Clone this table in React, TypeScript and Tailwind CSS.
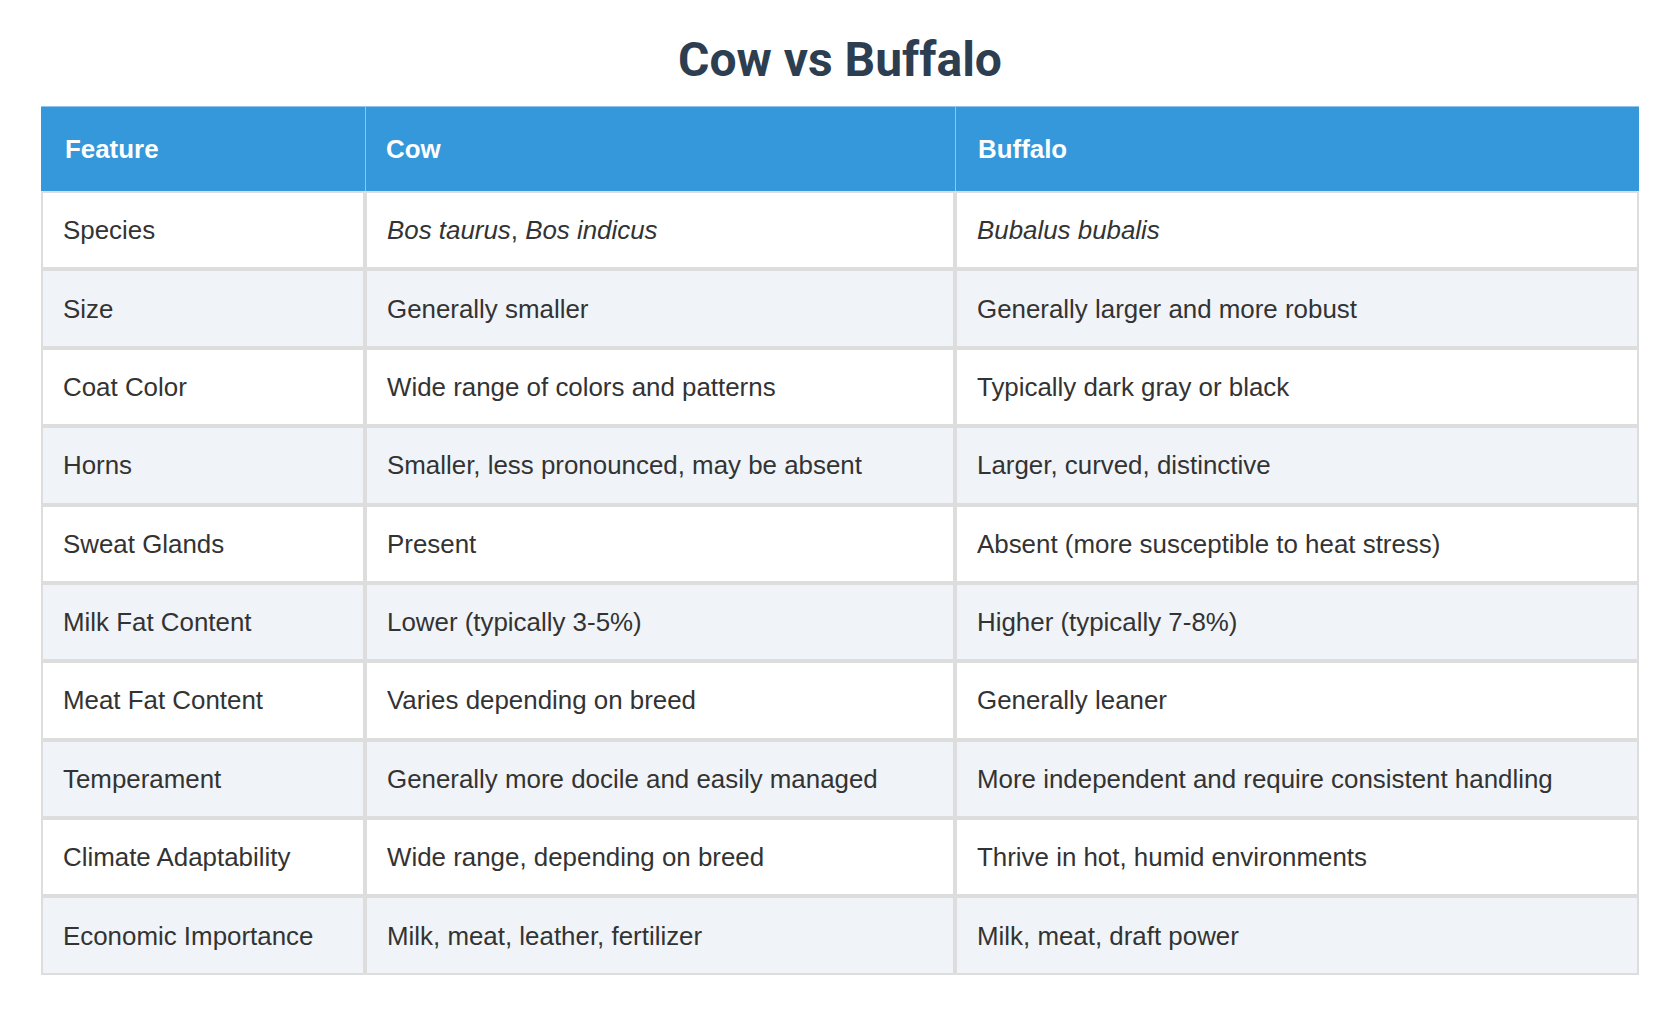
const rows: { feature: string; cow: React.ReactNode; buffalo: React.ReactNode }[] = [
  {
    feature: 'Species',
    cow: (
      <>
        <em>Bos taurus</em>, <em>Bos indicus</em>
      </>
    ),
    buffalo: <em>Bubalus bubalis</em>,
  },
  { feature: 'Size', cow: 'Generally smaller', buffalo: 'Generally larger and more robust' },
  { feature: 'Coat Color', cow: 'Wide range of colors and patterns', buffalo: 'Typically dark gray or black' },
  { feature: 'Horns', cow: 'Smaller, less pronounced, may be absent', buffalo: 'Larger, curved, distinctive' },
  { feature: 'Sweat Glands', cow: 'Present', buffalo: 'Absent (more susceptible to heat stress)' },
  { feature: 'Milk Fat Content', cow: 'Lower (typically 3-5%)', buffalo: 'Higher (typically 7-8%)' },
  { feature: 'Meat Fat Content', cow: 'Varies depending on breed', buffalo: 'Generally leaner' },
  { feature: 'Temperament', cow: 'Generally more docile and easily managed', buffalo: 'More independent and require consistent handling' },
  { feature: 'Climate Adaptability', cow: 'Wide range, depending on breed', buffalo: 'Thrive in hot, humid environments' },
  { feature: 'Economic Importance', cow: 'Milk, meat, leather, fertilizer', buffalo: 'Milk, meat, draft power' },
];

const App = () => {
  return (
    <div className="min-h-screen bg-white pt-[32px] pb-10">
      <h1 className="text-center text-[48px] leading-[56px] font-bold text-[#2c3e50] mb-[18px] font-['Roboto',sans-serif]">
        Cow vs Buffalo
      </h1>

      <table className="mx-auto w-[1598px] table-fixed border-separate border-spacing-0 font-['Liberation_Sans',Arial,sans-serif] text-[25.9px] leading-[30px] text-[#333333]">
        <colgroup>
          <col className="w-[324px]" />
          <col className="w-[590px]" />
          <col className="w-[684px]" />
        </colgroup>
        <thead className="bg-[#3498db] text-white">
          <tr>
            <th className="px-[24px] py-[27px] text-left font-bold border-t border-[#8fc4ec]">Feature</th>
            <th className="px-[20px] py-[27px] text-left font-bold border-t border-l border-[#8fc4ec]">Cow</th>
            <th className="px-[22px] py-[27px] text-left font-bold border-t border-l border-[#8fc4ec]">Buffalo</th>
          </tr>
        </thead>
        <tbody>
          {rows.map((row, i) => (
            <tr key={row.feature} className={i % 2 === 1 ? 'bg-[#f0f4f8]' : 'bg-white'}>
              <td className="px-[20px] py-[22.2px] border-2 border-[#dddddd] whitespace-nowrap">{row.feature}</td>
              <td className="px-[20px] py-[22.2px] border-2 border-[#dddddd] whitespace-nowrap">{row.cow}</td>
              <td className="px-[20px] py-[22.2px] border-2 border-[#dddddd] whitespace-nowrap">{row.buffalo}</td>
            </tr>
          ))}
        </tbody>
      </table>
    </div>
  );
};

export default App;
